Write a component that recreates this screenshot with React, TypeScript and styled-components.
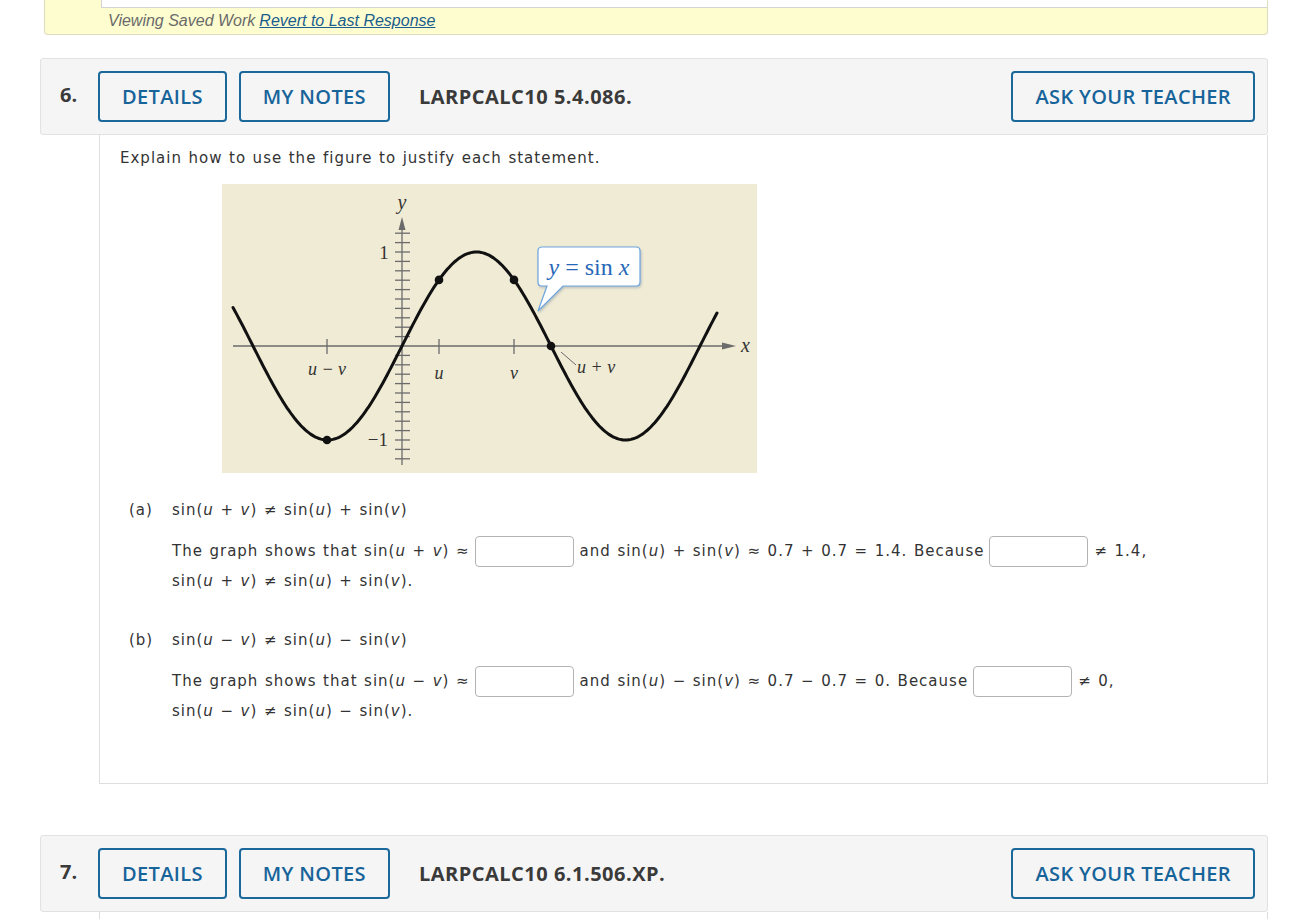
import React from 'react';
import styled, { createGlobalStyle } from 'styled-components';

const GlobalStyle = createGlobalStyle`
  body {
    margin: 0;
    background: #ffffff;
    font-family: "DejaVu Sans", Verdana, sans-serif;
    color: #333333;
  }
`;

const Page = styled.div`
  width: 1228px;
  padding-left: 40px;
`;

// saved work banner at the very top
const Banner = styled.div`
  margin-left: 4px;
  background: #fefdd0;
  border: 1px solid #dcdcc0;
  border-top: none;
  border-radius: 0 0 4px 4px;
  height: 35px;
  box-sizing: border-box;
`;

const BannerSheet = styled.div`
  margin-left: 56px;
  height: 7px;
  background: #ffffff;
  border: 1px solid #d4d4d4;
  border-top: none;
  border-right: none;
`;

const BannerText = styled.div`
  padding: 3px 0 0 63px;
  font-family: "Liberation Sans", Arial, sans-serif;
  font-style: italic;
  font-size: 16px;
  line-height: 20px;
  color: #6a6a6a;
`;

const BannerLink = styled.a`
  color: #1b5d8d;
  text-decoration: underline;
  margin-left: 4px;
`;

const Question = styled.section`
  margin-top: 23px;
  & + & {
    margin-top: 51px;
  }
`;

const QuestionHeader = styled.div`
  display: flex;
  align-items: center;
  height: 77px;
  box-sizing: border-box;
  background: #f5f5f5;
  border: 1px solid #e2e2e2;
  border-radius: 3px;
  padding: 0 12px 0 19px;
  font-family: "Open Sans", sans-serif;
`;

const QNumber = styled.span`
  font-size: 20px;
  font-weight: 700;
  color: #3a3a3a;
  width: 38px;
  margin-top: -4px;
`;

const HeaderButton = styled.button<{ $last?: boolean }>`
  height: 51px;
  box-sizing: border-box;
  padding: 0 22px;
  margin-right: ${(p) => (p.$last ? 0 : 12)}px;
  background: transparent;
  border: 2px solid #1b689b;
  border-radius: 4px;
  font-family: "Open Sans", sans-serif;
  font-size: 20px;
  font-weight: 600;
  color: #17649a;
  letter-spacing: 0.35px;
`;

const QTitle = styled.span`
  margin-left: 17px;
  font-size: 20px;
  font-weight: 700;
  color: #3a3a3a;
  letter-spacing: 0.5px;
  flex: 1;
`;

const QuestionBody = styled.div<{ $open?: boolean }>`
  margin-left: 59px;
  border: 1px solid #dedede;
  border-top: none;
  padding: ${(p) => (p.$open ? '12px 20px 57px' : '0')};
  height: ${(p) => (p.$open ? 'auto' : '10px')};
  font-size: 15px;
  line-height: 22px;
  letter-spacing: 1px;
  word-spacing: 0.8px;
`;

const Prompt = styled.p`
  margin: 0;
`;

const Figure = styled.div`
  margin: 15px 0 0 102px;
  width: 535px;
  height: 289px;
  background: #efebd5;
  letter-spacing: 0;
  word-spacing: 0;
`;

const Part = styled.div<{ $gap: number }>`
  display: grid;
  grid-template-columns: 43px 1fr;
  margin: ${(p) => p.$gap}px 0 0 9px;
`;

const PartLabel = styled.span``;

const Statement = styled.div``;

const Answer = styled.div`
  margin-top: 15px;
  line-height: 29px;
`;

const AnswerBox = styled.span`
  display: inline-block;
  width: 99px;
  height: 31px;
  box-sizing: border-box;
  margin: 0 6px 0 5px;
  border: 1px solid #b3b3b3;
  border-radius: 4px;
  background: #fff;
  vertical-align: middle;
`;

const V = styled.i`
  font-style: italic;
`;

// sine graph
const period = 298;
const ox = 180;
const oy = 162;
const amp = 94;
const fy = (x: number) => oy - amp * Math.sin(((x - ox) * 2 * Math.PI) / period);

function curvePath() {
  const pts: string[] = [];
  for (let x = 11; x <= 495; x += 2) {
    pts.push(`${pts.length ? 'L' : 'M'}${x.toFixed(1)},${fy(x).toFixed(1)}`);
  }
  return pts.join(' ');
}

function SineFigure() {
  const ticks: number[] = [];
  for (let i = -12; i <= 12; i++) {
    if (i !== 0) ticks.push(oy - i * 9.4);
  }
  const serif = '"Liberation Serif", "Times New Roman", serif';
  return (
    <Figure>
      <svg width="535" height="289" viewBox="0 0 535 289">
        <defs>
          <filter id="sh" x="-20%" y="-20%" width="140%" height="160%">
            <feDropShadow dx="1" dy="1.5" stdDeviation="1.2" floodColor="#7a8aa0" floodOpacity="0.45" />
          </filter>
        </defs>
        {/* axes */}
        <g stroke="#6b6b6b" strokeWidth="1.3" fill="none">
          <line x1="11" y1={oy} x2="506" y2={oy} />
          <line x1={ox} y1="40" x2={ox} y2="281" />
          {ticks.map((t) => (
            <line key={t} x1={ox - 7} y1={t} x2={ox + 8} y2={t} />
          ))}
          {[105, 217, 292].map((t) => (
            <line key={t} x1={t} y1={oy - 7} x2={t} y2={oy + 8} />
          ))}
          <line x1="339" y1="168" x2="354" y2="181" strokeWidth="1" />
        </g>
        <polygon points={`${ox},33 ${ox - 3.5},46 ${ox + 3.5},46`} fill="#6b6b6b" />
        <polygon points={`514,${oy} 500,${oy - 3.5} 500,${oy + 3.5}`} fill="#6b6b6b" />
        <path d={curvePath()} stroke="#111" strokeWidth="3" fill="none" strokeLinecap="round" />
        <g fill="#111">
          <circle cx="217" cy={fy(217)} r="4.3" />
          <circle cx="292" cy={fy(292)} r="4.3" />
          <circle cx="329" cy={fy(329)} r="4.3" />
          <circle cx="105" cy={fy(105)} r="4.3" />
        </g>
        <g fontFamily={serif} fill="#333" fontSize="18">
          <text x="180" y="25" textAnchor="middle" fontStyle="italic" fontSize="20">y</text>
          <text x="519" y="168" fontStyle="italic" fontSize="20">x</text>
          <text x="162" y="75" textAnchor="middle" fontSize="19">1</text>
          <text x="166" y="262" textAnchor="end" fontSize="19">−1</text>
          <text x="105" y="191" textAnchor="middle" fontStyle="italic">u − v</text>
          <text x="217" y="195" textAnchor="middle" fontStyle="italic">u</text>
          <text x="292" y="195" textAnchor="middle" fontStyle="italic">v</text>
          <text x="355" y="189" fontStyle="italic">u + v</text>
        </g>
        {/* callout */}
        <g filter="url(#sh)">
          <path
            d="M320,63 H414 Q418,63 418,67 V98 Q418,102 414,102 H341 L316,127 L325,102 H320 Q316,102 316,98 V67 Q316,63 320,63 Z"
            fill="#fff"
            stroke="#6ea6dc"
            strokeWidth="1.2"
          />
        </g>
        <text x="367" y="91" textAnchor="middle" fontFamily={serif} fontSize="24" fill="#2767b8">
          <tspan fontStyle="italic">y</tspan> = sin <tspan fontStyle="italic">x</tspan>
        </text>
      </svg>
    </Figure>
  );
}

function Header({ num, code }: { num: string; code: string }) {
  return (
    <QuestionHeader>
      <QNumber>{num}</QNumber>
      <HeaderButton>DETAILS</HeaderButton>
      <HeaderButton>MY NOTES</HeaderButton>
      <QTitle>{code}</QTitle>
      <HeaderButton $last>ASK YOUR TEACHER</HeaderButton>
    </QuestionHeader>
  );
}

export default function App() {
  return (
    <Page>
      <GlobalStyle />
      <Banner>
        <BannerSheet />
        <BannerText>
          Viewing Saved Work<BannerLink>Revert to Last Response</BannerLink>
        </BannerText>
      </Banner>

      <Question>
        <Header num="6." code="LARPCALC10 5.4.086." />
        <QuestionBody $open>
          <Prompt>Explain how to use the figure to justify each statement.</Prompt>
          <SineFigure />

          <Part $gap={26}>
            <PartLabel>(a)</PartLabel>
            <div>
              <Statement>
                sin(<V>u</V> + <V>v</V>) ≠ sin(<V>u</V>) + sin(<V>v</V>)
              </Statement>
              <Answer>
                The graph shows that sin(<V>u</V> + <V>v</V>) ≈<AnswerBox />and sin(<V>u</V>) + sin(<V>v</V>) ≈ 0.7 + 0.7 = 1.4. Because
                <AnswerBox />≠ 1.4,
                <br />
                sin(<V>u</V> + <V>v</V>) ≠ sin(<V>u</V>) + sin(<V>v</V>).
              </Answer>
            </div>
          </Part>

          <Part $gap={33}>
            <PartLabel>(b)</PartLabel>
            <div>
              <Statement>
                sin(<V>u</V> − <V>v</V>) ≠ sin(<V>u</V>) − sin(<V>v</V>)
              </Statement>
              <Answer>
                The graph shows that sin(<V>u</V> − <V>v</V>) ≈<AnswerBox />and sin(<V>u</V>) − sin(<V>v</V>) ≈ 0.7 − 0.7 = 0. Because
                <AnswerBox />≠ 0,
                <br />
                sin(<V>u</V> − <V>v</V>) ≠ sin(<V>u</V>) − sin(<V>v</V>).
              </Answer>
            </div>
          </Part>
        </QuestionBody>
      </Question>

      <Question>
        <Header num="7." code="LARPCALC10 6.1.506.XP." />
        <QuestionBody />
      </Question>
    </Page>
  );
}
